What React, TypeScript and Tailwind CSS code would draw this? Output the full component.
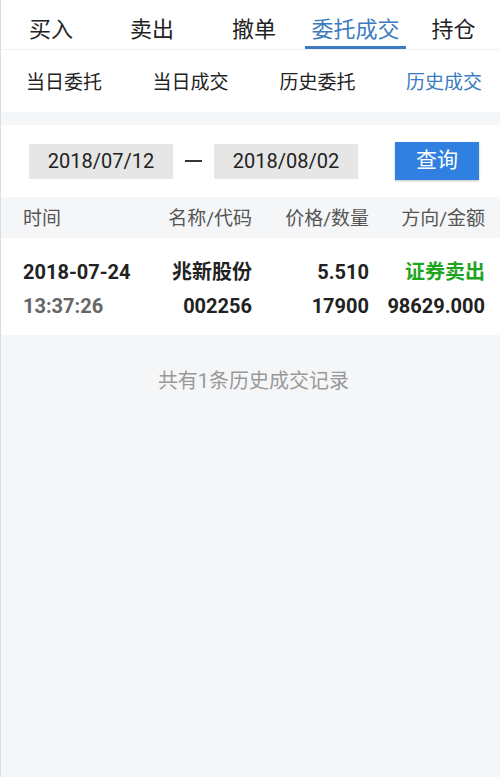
import React from 'react';

const topTabs = ['买入', '卖出', '撤单', '委托成交', '持仓'];
const subTabs = ['当日委托', '当日成交', '历史委托', '历史成交'];

const font = { fontFamily: 'Roboto, "Noto Sans CJK SC", sans-serif' };

export default function App() {
  return (
    <div style={font} className="w-[500px] h-[777px] bg-[#f5f6f8] border-l border-[#dcdde0] overflow-hidden">
      {/* top tabs */}
      <div className="h-[50px] bg-white grid grid-cols-[100px_102px_102px_101px_95px] border-b border-[#f0f0f2]">
        {topTabs.map((t, i) => (
          <div key={t} className="relative flex items-center justify-center pt-[9px]">
            <span className={`text-[22px] ${i === 3 ? 'text-[#3b7cc0]' : 'text-[#222]'}`}>{t}</span>
            {i === 3 && <div className="absolute left-0 right-0 bottom-0 h-[3px] bg-[#3b7cc0]" />}
          </div>
        ))}
      </div>

      {/* sub tabs */}
      <div className="h-[62px] bg-white grid grid-cols-[126px_127px_127px_120px]">
        {subTabs.map((t, i) => (
          <div key={t} className={`flex items-center justify-center pt-[4px] ${i === 3 ? 'pl-[6px]' : ''}`}>
            <span className={`text-[19px] ${i === 3 ? 'text-[#3b7cc0]' : 'text-[#222]'}`}>{t}</span>
          </div>
        ))}
      </div>

      {/* date filter */}
      <div className="mt-[13px] h-[72px] bg-white flex items-center pl-[28px]">
        <div className="w-[144px] h-[35px] bg-[#e6e6e6] flex items-center justify-center text-[20px] text-[#222]">2018/07/12</div>
        <div className="w-[41px] flex justify-center">
          <div className="w-[17px] h-[2px] bg-[#333]" />
        </div>
        <div className="w-[144px] h-[35px] bg-[#e6e6e6] flex items-center justify-center text-[20px] text-[#222]">2018/08/02</div>
        <button className="ml-[37px] w-[84px] h-[38px] bg-[#2f80e0] text-white text-[21px] shadow-[0_1px_2px_rgba(0,0,0,0.25)]">查询</button>
      </div>

      {/* header */}
      <div className="h-[41px] flex items-center text-[19px] text-[#555] pl-[22px] pr-[15px] pt-[3px]">
        <div className="flex-1">时间</div>
        <div className="w-[120px] text-right">名称/代码</div>
        <div className="w-[117px] text-right">价格/数量</div>
        <div className="w-[116px] text-right">方向/金额</div>
      </div>

      {/* record */}
      <div className="h-[97px] bg-white flex flex-col justify-center gap-[9px] pl-[22px] pr-[15px] pt-[5px] font-bold text-[20px]">
        <div className="flex items-center h-[25px]">
          <div className="flex-1 text-[#222]">2018-07-24</div>
          <div className="w-[120px] text-right text-[#222]">兆新股份</div>
          <div className="w-[117px] text-right text-[#222]">5.510</div>
          <div className="w-[116px] text-right text-[#1ea51e]">证券卖出</div>
        </div>
        <div className="flex items-center h-[25px]">
          <div className="flex-1 text-[#666]">13:37:26</div>
          <div className="w-[120px] text-right text-[#222]">002256</div>
          <div className="w-[117px] text-right text-[#222]">17900</div>
          <div className="w-[116px] text-right text-[#222]">98629.000</div>
        </div>
      </div>

      <div className="pt-[31px] text-center text-[20px] text-[#999] pl-[6px]">共有1条历史成交记录</div>
    </div>
  );
}
